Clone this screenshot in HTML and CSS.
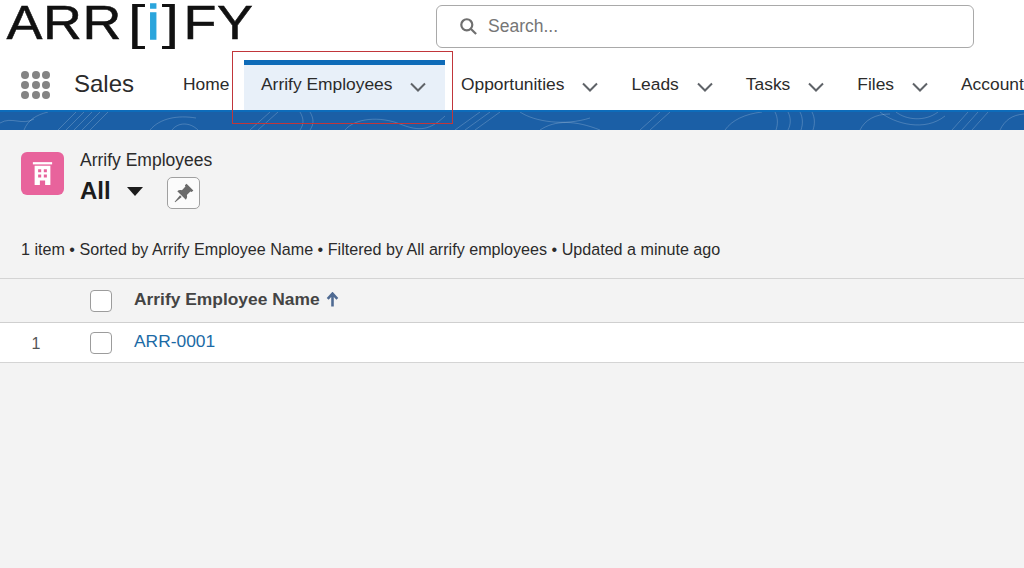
FILE: index.html
```html
<!DOCTYPE html>
<html lang="en">
<head>
<meta charset="utf-8">
<title>Arrify Employees</title>
<link rel="stylesheet" href="styles.css">
</head>
<body>
<header class="header">
  <div class="top">
    <div class="logo-box"><div class="logo">ARR<span class="br br-l">[</span><span class="logo-i">i</span><span class="br br-r">]</span>FY</div></div>
    <div class="search">
      <svg class="search-icon" viewBox="0 0 20 20"><circle cx="8.2" cy="8.2" r="5.8"/><path d="M12.6 12.6 18 18"/></svg>
      <span>Search...</span>
    </div>
  </div>
  <nav class="nav">
    <div class="launcher">
      <i></i><i></i><i></i><i></i><i></i><i></i><i></i><i></i><i></i>
    </div>
    <div class="app">Sales</div>
    <a class="item home">Home</a>
    <a class="item active">Arrify Employees<svg class="chev" viewBox="0 0 16 10"><path d="M1 1.5 8 8.5 15 1.5"/></svg></a>
    <a class="item">Opportunities<svg class="chev" viewBox="0 0 16 10"><path d="M1 1.5 8 8.5 15 1.5"/></svg></a>
    <a class="item">Leads<svg class="chev" viewBox="0 0 16 10"><path d="M1 1.5 8 8.5 15 1.5"/></svg></a>
    <a class="item">Tasks<svg class="chev" viewBox="0 0 16 10"><path d="M1 1.5 8 8.5 15 1.5"/></svg></a>
    <a class="item">Files<svg class="chev" viewBox="0 0 16 10"><path d="M1 1.5 8 8.5 15 1.5"/></svg></a>
    <a class="item">Accounts</a>
  </nav>
  <div class="highlight"></div>
</header>
<div class="banner">
  <svg viewBox="0 0 1024 18" preserveAspectRatio="none" fill="none">
    <path d="M0 11C12 4 22 14 34 7M24 18C28 8 36 3 48 0M58 18 76 0M66 18 84 0M74 18 92 0M82 18 100 0M90 18 108 0M150 18C160 6 178 3 196 6M172 18C178 10 190 10 198 18M250 18 270 0M258 18 278 0M300 0C304 7 304 12 300 18M310 0C314 7 314 12 310 18M345 18C355 6 380 4 400 12S430 18 445 4M455 18 480 0M465 18 490 0M475 18 500 0M520 0C535 10 565 14 590 6M540 18C555 8 575 8 600 18M640 18 660 0M650 18 670 0M725 18C732 8 745 2 762 0M775 0C778 6 778 12 776 18M788 0C791 6 791 12 788 18M800 0C803 6 803 12 801 18M812 0C815 6 815 12 813 18M860 18C865 8 875 2 890 2M880 0C895 12 925 20 945 4M896 0C906 8 925 10 938 0M952 18 968 0M962 18 978 0M972 18 988 0M1000 18C1005 8 1012 3 1024 2"/>
  </svg>
</div>
<main class="main">
  <section class="page-head">
    <div class="obj-icon">
      <svg viewBox="0 0 24 28"><path d="M1 1h22v2.600H1z"/><path fill-rule="evenodd" d="M3 5h18v22h-6v-5H9v5H3zM7 9h3.500v3.500H7zM13.500 9H17v3.500h-3.500zM7 15h3.500v3.500H7zM13.500 15H17v3.500h-3.500z"/></svg>
    </div>
    <div class="titles">
      <div class="obj-name">Arrify Employees</div>
      <div class="view-row">
        <span class="view-name">All</span>
        <span class="caret"></span>
        <span class="pin">
          <svg viewBox="0 0 20 20"><path d="M12.300 1.500 18.500 7.700 17 9.200 15.800 8.700 12.600 11.900C13.100 13.400 12.800 15 11.700 16.100L3.900 8.300C5 7.200 6.600 6.900 8.100 7.400L11.300 4.200 10.800 3ZM6.400 12.100 7.900 13.600 2 18.500 1.500 18Z"/></svg>
        </span>
      </div>
    </div>
  </section>
  <p class="meta">1 item • Sorted by Arrify Employee Name • Filtered by All arrify employees • Updated a minute ago</p>
  <div class="table">
    <div class="row head">
      <div class="num"></div>
      <div class="check"><span class="box"></span></div>
      <div class="name">Arrify Employee Name <svg class="arrow" viewBox="0 0 12 14"><path d="M6 13.500V2M1.500 6.500 6 1.500 10.500 6.500"/></svg></div>
    </div>
    <div class="row body">
      <div class="num">1</div>
      <div class="check"><span class="box"></span></div>
      <div class="name"><a class="link">ARR-0001</a></div>
    </div>
  </div>
</main>
</body>
</html>
```
FILE: styles.css
```css
* { box-sizing: border-box; }
html, body { margin: 0; height: 100%; overflow: hidden; }
body {
  width: 1024px;
  height: 568px;
  background: #f3f3f3;
  color: #2b2b2b;
  font-family: "Liberation Sans", Arial, sans-serif;
  display: flex;
  flex-direction: column;
}
.header { position: relative; background: #fff; height: 110px; flex: none; }
.top { height: 60px; display: flex; align-items: flex-start; }
.logo-box { width: 436px; height: 50px; flex: none; }
.logo {
  padding-left: 6px;
  font-size: 49px;
  line-height: 44px;
  letter-spacing: .5px;
  color: #111;
  white-space: nowrap;
  transform: scaleX(1.1);
  transform-origin: left top;
  -webkit-text-stroke: .5px #111;
}
.logo .br {
  display: inline-block;
  width: 20px;
  text-align: center;
  letter-spacing: 0;
  transform: scaleX(1.2);
  -webkit-text-stroke: 0;
}
.br-l { margin-left: 3px; }
.br-r { margin-right: 1.500px; }
.logo-i { color: #2ba5dc; -webkit-text-stroke: 1.500px #2ba5dc; }
.search {
  margin-top: 5px;
  width: 538px;
  height: 43px;
  border: 1px solid #a9a9a9;
  border-radius: 6px;
  display: flex;
  align-items: center;
  padding-left: 22px;
  gap: 10px;
  font-size: 17.500px;
  color: #767676;
}
.search-icon { width: 19px; height: 19px; fill: none; stroke: #6f6f6f; stroke-width: 2.300; flex: none; }
.nav { display: flex; height: 50px; white-space: nowrap; overflow: hidden; }
.launcher {
  margin: 11px 0 0 21px;
  width: 29px;
  height: 28px;
  display: grid;
  grid-template-columns: repeat(3, 8px);
  grid-template-rows: repeat(3, 8px);
  justify-content: space-between;
  align-content: space-between;
  flex: none;
}
.launcher i { background: #848484; border-radius: 50%; }
.app { margin-left: 24px; width: 109px; font-size: 24px; line-height: 48px; color: #2b2b2b; flex: none; }
.item {
  display: flex;
  align-items: center;
  height: 50px;
  padding: 0 0 7px 16px;
  font-size: 17.400px;
  color: #2b2b2b;
  border-top: 5px solid transparent;
  flex: none;
}
.item.home { padding-left: 0; width: 62px; }
.item.active {
  width: 201px;
  padding-left: 17px;
  margin-left: -1px;
  background: #e8f0f9;
  border-top-color: #0e6bb8;
}
.chev { width: 16px; height: 10px; margin: 5px 17px 0 18px; fill: none; stroke: #5f6368; stroke-width: 2; flex: none; }
.highlight {
  position: absolute;
  left: 232px;
  top: 51px;
  width: 221px;
  height: 73px;
  border: 1px solid #c1363a;
  z-index: 2;
  pointer-events: none;
}
.banner {
  height: 20px;
  flex: none;
  background: #1b5fa6;
  border-top: 2px solid #0d6cbb;
}
.banner svg { display: block; width: 100%; height: 100%; stroke: rgba(255,255,255,.2); stroke-width: 1; }
.main { flex: 1; background: #f3f3f3; padding-top: 22px; }
.page-head { display: flex; padding-left: 21px; gap: 16px; height: 57px; }
.obj-icon {
  width: 43px;
  height: 43px;
  border-radius: 6px;
  background: #e8639c;
  display: flex;
  align-items: center;
  justify-content: center;
}
.obj-icon svg { width: 21px; height: 25px; fill: #fff; }
.titles { display: flex; flex-direction: column; }
.obj-name { margin-top: -1px; font-size: 17.500px; line-height: 18px; color: #2b2b2b; }
.view-row { display: flex; align-items: flex-start; margin-top: 8px; }
.view-name { font-size: 24px; font-weight: 700; line-height: 28px; color: #1c1c1c; width: 47px; }
.caret {
  margin-top: 10px;
  width: 0;
  height: 0;
  border-left: 8px solid transparent;
  border-right: 8px solid transparent;
  border-top: 9px solid #1c1c1c;
}
.pin {
  margin: 0 0 0 24px;
  width: 33px;
  height: 32px;
  border: 1px solid #a0a0a0;
  border-radius: 5px;
  background: #fbfbfb;
  display: flex;
  align-items: center;
  justify-content: center;
}
.pin svg { width: 22px; height: 22px; fill: #6a6a6a; }
.meta { margin: 30px 0 0 21px; font-size: 16.120px; line-height: 20px; color: #2b2b2b; height: 20px; }
.table { margin-top: 19px; }
.row { display: flex; align-items: center; border-bottom: 1px solid #d4d4d4; }
.row.head { height: 45px; border-top: 1px solid #d4d4d4; border-bottom-color: #cfcfcf; }
.row.body { height: 40px; background: #fff; }
.num { width: 72px; padding-top: 2px; text-align: center; font-size: 16px; color: #555; }
.check { width: 62px; padding-left: 18px; display: flex; }
.box { width: 22px; height: 22px; border: 1px solid #9c9c9c; border-radius: 4px; background: #fff; }
.name { font-size: 17.400px; }
.body .name { padding-bottom: 2px; }
.head .name { font-weight: 700; color: #444; display: flex; align-items: center; gap: 6px; padding-bottom: 2px; }
.arrow { width: 13px; height: 15px; fill: none; stroke: #4f6a92; stroke-width: 2.400; }
.link { color: #1b6aa5; }
```
